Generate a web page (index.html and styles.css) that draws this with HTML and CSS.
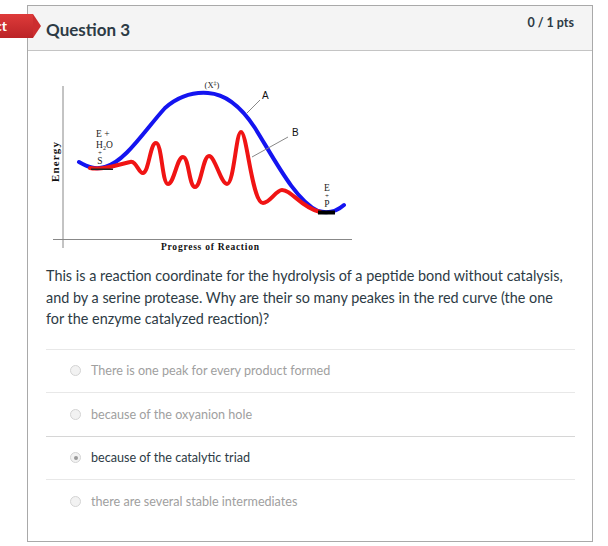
FILE: index.html
```html
<!DOCTYPE html>
<html>
<head>
<meta charset="utf-8">
<link rel="stylesheet" href="styles.css">
</head>
<body>
<div class="badge"><span>Incorrect</span></div>
<div class="card">
  <div class="card-header">
    <div class="title">Question 3</div>
    <div class="pts">0 / 1 pts</div>
  </div>
  <div class="card-body">
    <svg class="graph" width="314" height="188" viewBox="46 70 314 188" xmlns="http://www.w3.org/2000/svg">
      <line x1="63" y1="86" x2="63" y2="248" stroke="#888" stroke-width="1"/>
      <line x1="53" y1="239.5" x2="352" y2="239.5" stroke="#888" stroke-width="1"/>
      <text x="0" y="0" transform="translate(58.5,162) rotate(-90)" text-anchor="middle" class="g-bold" font-size="11" textLength="40">Energy</text>
      <text x="210" y="250" text-anchor="middle" class="g-bold" font-size="9.5" textLength="98">Progress of Reaction</text>
      <path d="M79,162 C88,167 95,170 105,167 C125,162 145,130 165,108 C180,95 195,92 208,93 C225,94 240,105 255,128 C275,160 295,200 318,211 C328,214 336,212 344,205" fill="none" stroke="#1414f0" stroke-width="4" stroke-linecap="round"/>
      <path d="M90,168 C100,170 115,166 130,162 C136,160 139,174 143,173 C149,172 150,143 156,143 C162,143 162,184 168,184 C174,184 177,157 183,157 C189,157 189,187 195,187 C201,187 203,156 209,156 C215,156 221,184 227,184 C234,184 236,132 241,132 C247,132 252,203 263,203 C270,203 276,190 282,190 C292,190 300,207 320,212" fill="none" stroke="#f01414" stroke-width="4" stroke-linecap="round"/>
      <rect x="91" y="168.5" width="22" height="1.5" fill="#222"/>
      <rect x="318" y="210.5" width="17" height="4" fill="#000"/>
      <line x1="247" y1="113" x2="260" y2="100" stroke="#888" stroke-width="1"/>
      <line x1="252" y1="157" x2="288" y2="137" stroke="#888" stroke-width="1"/>
      <text x="212" y="88" text-anchor="middle" class="g-serif" font-size="8.5">(X<tspan font-size="6" dy="-3">‡</tspan><tspan dy="3">)</tspan></text>
      <text x="262" y="99" class="g-sans" font-size="10">A</text>
      <text x="292" y="136" class="g-sans" font-size="10">B</text>
      <text x="96" y="137" class="g-serif" font-size="9.5">E +</text>
      <text x="96" y="148" class="g-serif" font-size="9.5">H<tspan font-size="6" dy="2">2</tspan><tspan dy="-2">O</tspan></text>
      <text x="100" y="154.5" text-anchor="middle" class="g-serif" font-size="7">+</text>
      <text x="100" y="164" text-anchor="middle" class="g-serif" font-size="9.5">S</text>
      <text x="327" y="191" text-anchor="middle" class="g-serif" font-size="9.5">E</text>
      <text x="327" y="197.5" text-anchor="middle" class="g-serif" font-size="7">+</text>
      <text x="327" y="207" text-anchor="middle" class="g-serif" font-size="9.5">P</text>
    </svg>
    <p class="question">This is a reaction coordinate for the hydrolysis of a peptide bond without catalysis, and by a serine protease. Why are their so many peakes in the red curve (the one for the enzyme catalyzed reaction)?</p>
    <div class="answers">
      <div class="answer"><span class="radio"></span><span class="label">There is one peak for every product formed</span></div>
      <div class="answer"><span class="radio"></span><span class="label">because of the oxyanion hole</span></div>
      <div class="answer selected"><span class="radio"></span><span class="label">because of the catalytic triad</span></div>
      <div class="answer"><span class="radio"></span><span class="label">there are several stable intermediates</span></div>
    </div>
  </div>
</div>
</body>
</html>
```

FILE: styles.css
```css
* { box-sizing: border-box; }
html, body { margin: 0; padding: 0; background: #fff; }
body {
  font-family: Lato, "Open Sans", sans-serif;
  color: #2d3b45;
  position: relative;
  width: 608px;
  height: 546px;
  overflow: hidden;
}
.badge {
  position: absolute;
  left: -60px;
  top: 14px;
  width: 93px;
  height: 24px;
  background: linear-gradient(#de3b3a, #bb2327);
  color: #fff;
  font-weight: bold;
  font-size: 14px;
  line-height: 24px;
  text-align: right;
  padding-right: 26px;
  z-index: 2;
}
.badge::after {
  content: "";
  position: absolute;
  right: -8px;
  top: 0;
  border-top: 12px solid transparent;
  border-bottom: 12px solid transparent;
  border-left: 8px solid #cc2d2f;
}
.card {
  margin: 5px 0 0 27px;
  width: 566px;
  height: 537px;
  border: 1px solid #a9a9a9;
  background: #fff;
}
.card-header {
  height: 45px;
  background: #f4f4f4;
  border-bottom: 1px solid #c4c4c4;
  display: flex;
  justify-content: space-between;
  align-items: flex-start;
  padding: 0 18px 0 18px;
}
.title {
  font-size: 17px;
  font-weight: bold;
  line-height: 20px;
  margin-top: 14px;
  color: #2d3b45;
}
.pts {
  font-size: 12.5px;
  line-height: 16px;
  margin-top: 9px;
  color: #2d3b45;
  font-weight: bold;
}
.card-body {
  padding: 19px 17px 0 18px;
}
.graph { display: block; }
.g-bold { font-family: "Liberation Serif", serif; font-weight: bold; fill: #111; }
.g-serif { font-family: "Liberation Serif", serif; fill: #222; }
.g-sans { font-family: "Liberation Sans", sans-serif; fill: #111; }
.question {
  margin: 7px 0 19px 0;
  max-width: 522px;
  font-size: 14.4px;
  line-height: 21.5px;
}
.answer {
  height: 43.5px;
  border-top: 1px solid #e8e8e8;
  display: flex;
  align-items: center;
  font-size: 12.6px;
  color: #a0a0a0;
}
.answer.selected { border-top-color: #d6d6d6; color: #2d3b45; }
.radio {
  width: 11px;
  height: 11px;
  border-radius: 50%;
  border: 1px solid #d4d4d4;
  background: #f2f2f2;
  margin-left: 24px;
  margin-right: 10px;
  position: relative;
}
.answer.selected .radio::after {
  content: "";
  position: absolute;
  left: 2.5px;
  top: 2.5px;
  width: 4px;
  height: 4px;
  border-radius: 50%;
  background: #9a9a9a;
}
```
